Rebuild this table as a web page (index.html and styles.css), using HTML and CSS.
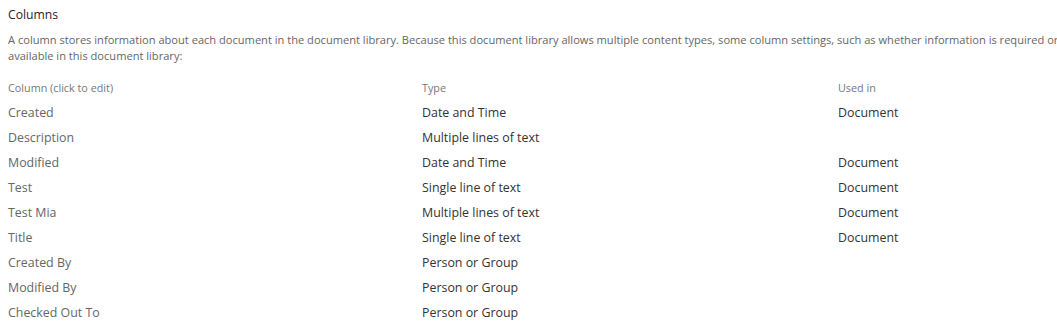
FILE: index.html
```html
<!DOCTYPE html>
<html lang="en">

<head>
    <meta charset="UTF-8">
    <title>Columns</title>
    <link rel="stylesheet" href="styles.css">
</head>

<body>
    <div class="section">
        <h3 class="section-title">Columns</h3>
        <p class="section-desc">A column stores information about each document in the document library. Because this document library allows multiple content types, some column settings, such as whether information is required or<br>available in this document library:</p>

        <table class="columns-table">
            <thead>
                <tr>
                    <th class="col-name">Column (click to edit)</th>
                    <th class="col-type">Type</th>
                    <th class="col-used">Used in</th>
                </tr>
            </thead>
            <tbody>
                <tr><td class="col-name">Created</td><td class="col-type">Date and Time</td><td class="col-used">Document</td></tr>
                <tr><td class="col-name">Description</td><td class="col-type">Multiple lines of text</td><td class="col-used"></td></tr>
                <tr><td class="col-name">Modified</td><td class="col-type">Date and Time</td><td class="col-used">Document</td></tr>
                <tr><td class="col-name">Test</td><td class="col-type">Single line of text</td><td class="col-used">Document</td></tr>
                <tr><td class="col-name">Test Mia</td><td class="col-type">Multiple lines of text</td><td class="col-used">Document</td></tr>
                <tr><td class="col-name">Title</td><td class="col-type">Single line of text</td><td class="col-used">Document</td></tr>
                <tr><td class="col-name">Created By</td><td class="col-type">Person or Group</td><td class="col-used"></td></tr>
                <tr><td class="col-name">Modified By</td><td class="col-type">Person or Group</td><td class="col-used"></td></tr>
                <tr><td class="col-name">Checked Out To</td><td class="col-type">Person or Group</td><td class="col-used"></td></tr>
            </tbody>
        </table>
    </div>
</body>

</html>
```

FILE: styles.css
```css
body {
    margin: 0;
    padding: 0;
    font-family: 'Open Sans', 'Noto Sans', sans-serif;
    background-color: #ffffff;
    color: #444444;
    overflow: hidden;
}

.section {
    padding: 6px 8px 0 8px;
}

.section-title {
    margin: 0;
    font-size: 12.2px;
    font-weight: normal;
    line-height: 18px;
    color: #262626;
}

.section-desc {
    margin: 8px 0 0 0;
    font-size: 11.1px;
    line-height: 16px;
    color: #666666;
    white-space: nowrap;
}

.columns-table {
    border-collapse: collapse;
    margin-top: 15px;
}

.columns-table th {
    font-size: 10.8px;
    font-weight: normal;
    text-align: left;
    color: #777777;
    height: 16px;
    padding: 0 0 5px 0;
}

.columns-table td {
    font-size: 12.4px;
    height: 25px;
    padding: 0;
    white-space: nowrap;
}

.col-name {
    width: 414px;
}

.col-type {
    width: 416px;
}

td.col-name {
    color: #666666;
}

td.col-type,
td.col-used {
    color: #333333;
}
```
